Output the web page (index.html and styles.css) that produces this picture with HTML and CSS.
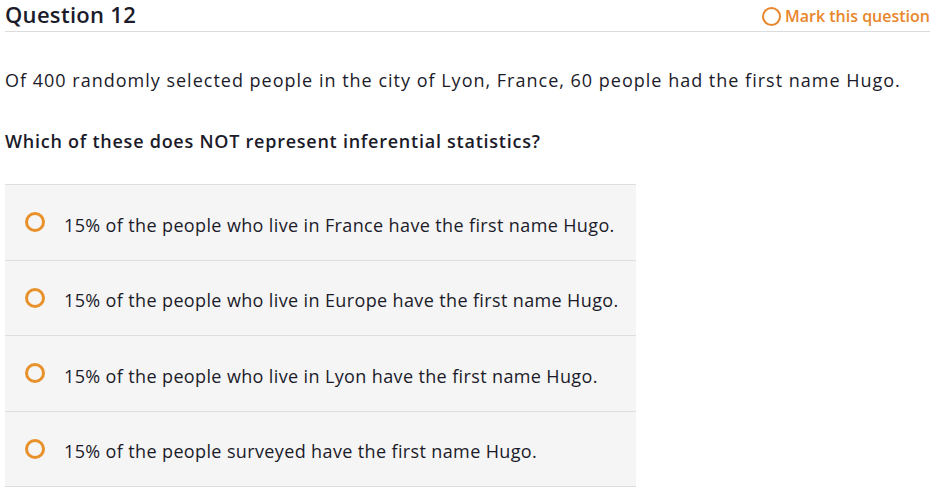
FILE: index.html
```html
<!DOCTYPE html>
<html lang="en">
<head>
  <meta charset="UTF-8">
  <title>Question 12</title>
  <link rel="stylesheet" href="styles.css">
</head>
<body>

<header class="q-head">
  <h1>Question 12</h1>
  <a href="#" class="mark"><span class="mark-ring"></span>Mark this question</a>
</header>

<p class="stem">Of 400 randomly selected people in the city of Lyon, France, 60 people had the first name Hugo.</p>
<p class="ask">Which of these does NOT represent inferential statistics?</p>

<ul class="choices">
  <li><span class="radio"></span><span class="label">15% of the people who live in France have the first name Hugo.</span></li>
  <li><span class="radio"></span><span class="label">15% of the people who live in Europe have the first name Hugo.</span></li>
  <li><span class="radio"></span><span class="label">15% of the people who live in Lyon have the first name Hugo.</span></li>
  <li><span class="radio"></span><span class="label">15% of the people surveyed have the first name Hugo.</span></li>
</ul>

</body>
</html>
```

FILE: styles.css
```css
body {
  font-family: "Open Sans", sans-serif;
  color: #1b1b2a;
  margin: 0;
  padding: 0 4px 0 5px;
}
.q-head {
  display: flex;
  justify-content: space-between;
  align-items: center;
  height: 31px;
  border-bottom: 1px solid #dcdcdc;
}
.q-head h1 {
  font-size: 22px;
  font-weight: 600;
  letter-spacing: 0.3px;
  margin: 0;
  padding-bottom: 4px;
}
.mark {
  display: flex;
  align-items: center;
  gap: 4px;
  color: #e8862c;
  font-size: 16px;
  font-weight: 600;
  text-decoration: none;
  padding-top: 1px;
}
.mark-ring {
  width: 15px;
  height: 15px;
  border: 2px solid #e8862c;
  border-radius: 50%;
}
.stem {
  font-size: 18px;
  letter-spacing: 1px;
  margin: 36px 0 0;
}
.ask {
  font-size: 18px;
  font-weight: 600;
  letter-spacing: 0.75px;
  margin: 37px 0 0;
}
.choices {
  list-style: none;
  margin: 31px 0 0;
  padding: 0;
  width: 631px;
  border-top: 1px solid #dedede;
}
.choices li {
  display: flex;
  align-items: center;
  height: 74.5px;
  padding-left: 20px;
  background-color: #f5f5f5;
  border-bottom: 1px solid #dedede;
  font-size: 18px;
  letter-spacing: 0.37px;
}
.radio {
  width: 14px;
  height: 14px;
  border: 3px solid #e8912b;
  border-radius: 50%;
  margin-right: 19px;
}
.label {
  padding-top: 5px;
}
```
